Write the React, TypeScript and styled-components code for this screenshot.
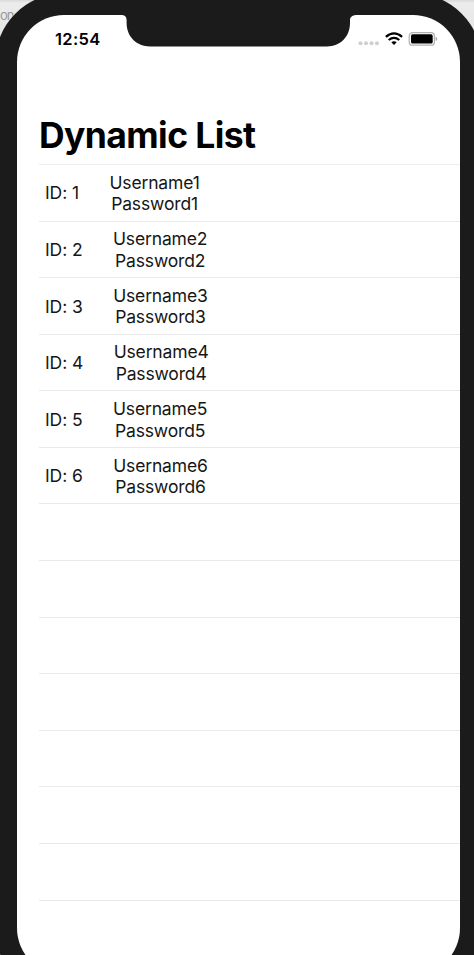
import React from "react";
import styled, { createGlobalStyle } from "styled-components";

const GlobalStyle = createGlobalStyle`
  * { box-sizing: border-box; }
  html, body { margin: 0; padding: 0; background: #e4e4e4; }
  body { overflow: hidden; }
`;

const Viewport = styled.main`
  position: relative;
  width: 474px;
  height: 955px;
  overflow: hidden;
  background: linear-gradient(#d9d9d9 0, #ececec 3px, #e4e4e4 36px);
  font-family: Inter, "Liberation Sans", sans-serif;
  color: #161616;
`;

const WindowLabel = styled.span`
  position: absolute;
  left: 0;
  top: 7px;
  font-size: 13px;
  line-height: 16px;
  letter-spacing: -1px;
  color: #999;
`;

const Device = styled.div`
  position: relative;
  width: 487.5px;
  height: 1005px;
  margin: -7.5px 0 0 -5.5px;
  padding: 22.5px;
  border-radius: 70px;
  background: #1b1b1b;
`;

const Screen = styled.div`
  position: relative;
  height: 960px;
  border-radius: 47px;
  background: #fff;
  overflow: hidden;
`;

const Notch = styled.svg`
  position: absolute;
  left: 104px;
  top: -1px;
  width: 236px;
  height: 33px;
`;

const StatusBar = styled.header`
  display: flex;
  justify-content: space-between;
  height: 100px;
  padding: 16px 22px 0 38px;
`;

const Clock = styled.time`
  font-size: 16.5px;
  line-height: 17px;
  font-weight: 600;
  letter-spacing: 0.35px;
  color: #000;
`;

const StatusIcons = styled.svg`
  width: 80px;
  height: 16px;
`;

const Title = styled.h1`
  margin: 0;
  height: 49px;
  padding-left: 22px;
  font-size: 35.5px;
  line-height: 41px;
  font-weight: 700;
  letter-spacing: -0.6px;
  color: #000;
`;

const List = styled.ul`
  list-style: none;
  margin: 0 0 0 22px;
  padding: 0;
  border-top: 1px solid #ededed;
`;

const Row = styled.li`
  display: flex;
  align-items: center;
  height: 56.58px;
  padding: 1px 0 0 6px;
  border-bottom: 1px solid #e9e9e9;
  font-size: 17.5px;
  line-height: 21.6px;
`;

const Identifier = styled.span`
  letter-spacing: -0.1px;
`;

const Credentials = styled.div`
  display: flex;
  flex-direction: column;
  align-items: center;
  margin-left: 30.5px;
  letter-spacing: -0.15px;
`;

const ids = [1, 2, 3, 4, 5, 6];
const emptyRows = Array.from({ length: 7 }, (_, i) => i);

export default function App() {
  return (
    <Viewport>
      <GlobalStyle />
      <WindowLabel>on</WindowLabel>
      <Device>
        <Screen>
          <Notch viewBox="0 0 236 33" fill="#1b1b1b">
            <path d="M0 0H236V1C233 1 229 2 229 6V9C229 23 219 32.4 206 32.4H29C16 32.4 5.6 23 5.6 9V6C5.6 2 3 1 0 1Z" />
          </Notch>
          <StatusBar>
            <Clock>12:54</Clock>
            <StatusIcons viewBox="0 0 80 16">
              <g fill="#cfcfcf">
                <circle cx="2.5" cy="12.2" r="2" />
                <circle cx="8" cy="12.2" r="2" />
                <circle cx="13.5" cy="12.2" r="2" />
                <circle cx="19" cy="12.2" r="2" />
              </g>
              <g fill="none" stroke="#000" strokeWidth="2.2">
                <path d="M27.9 5.8Q36 -1.1 44.1 5.8" />
                <path d="M30.7 9Q36 4.6 41.3 9" />
              </g>
              <path d="M33.3 11.3Q36 9.2 38.7 11.3L36 14Z" />
              <rect x="51.2" y="1.6" width="25.2" height="12.6" rx="3.3" fill="#fff" stroke="#b0b0b0" strokeWidth="1.2" />
              <rect x="53" y="3.3" width="21.7" height="9.2" rx="1.6" />
              <path d="M77.6 5.8Q79.3 6.3 79.3 7.9Q79.3 9.5 77.6 10Z" fill="#aaa" />
            </StatusIcons>
          </StatusBar>
          <Title>Dynamic List</Title>
          <List>
            {ids.map((id) => (
              <Row key={id}>
                <Identifier>ID: {id}</Identifier>
                <Credentials>
                  <span>Username{id}</span>
                  <span>Password{id}</span>
                </Credentials>
              </Row>
            ))}
            {emptyRows.map((row) => (
              <Row key={`empty-${row}`} />
            ))}
          </List>
        </Screen>
      </Device>
    </Viewport>
  );
}
